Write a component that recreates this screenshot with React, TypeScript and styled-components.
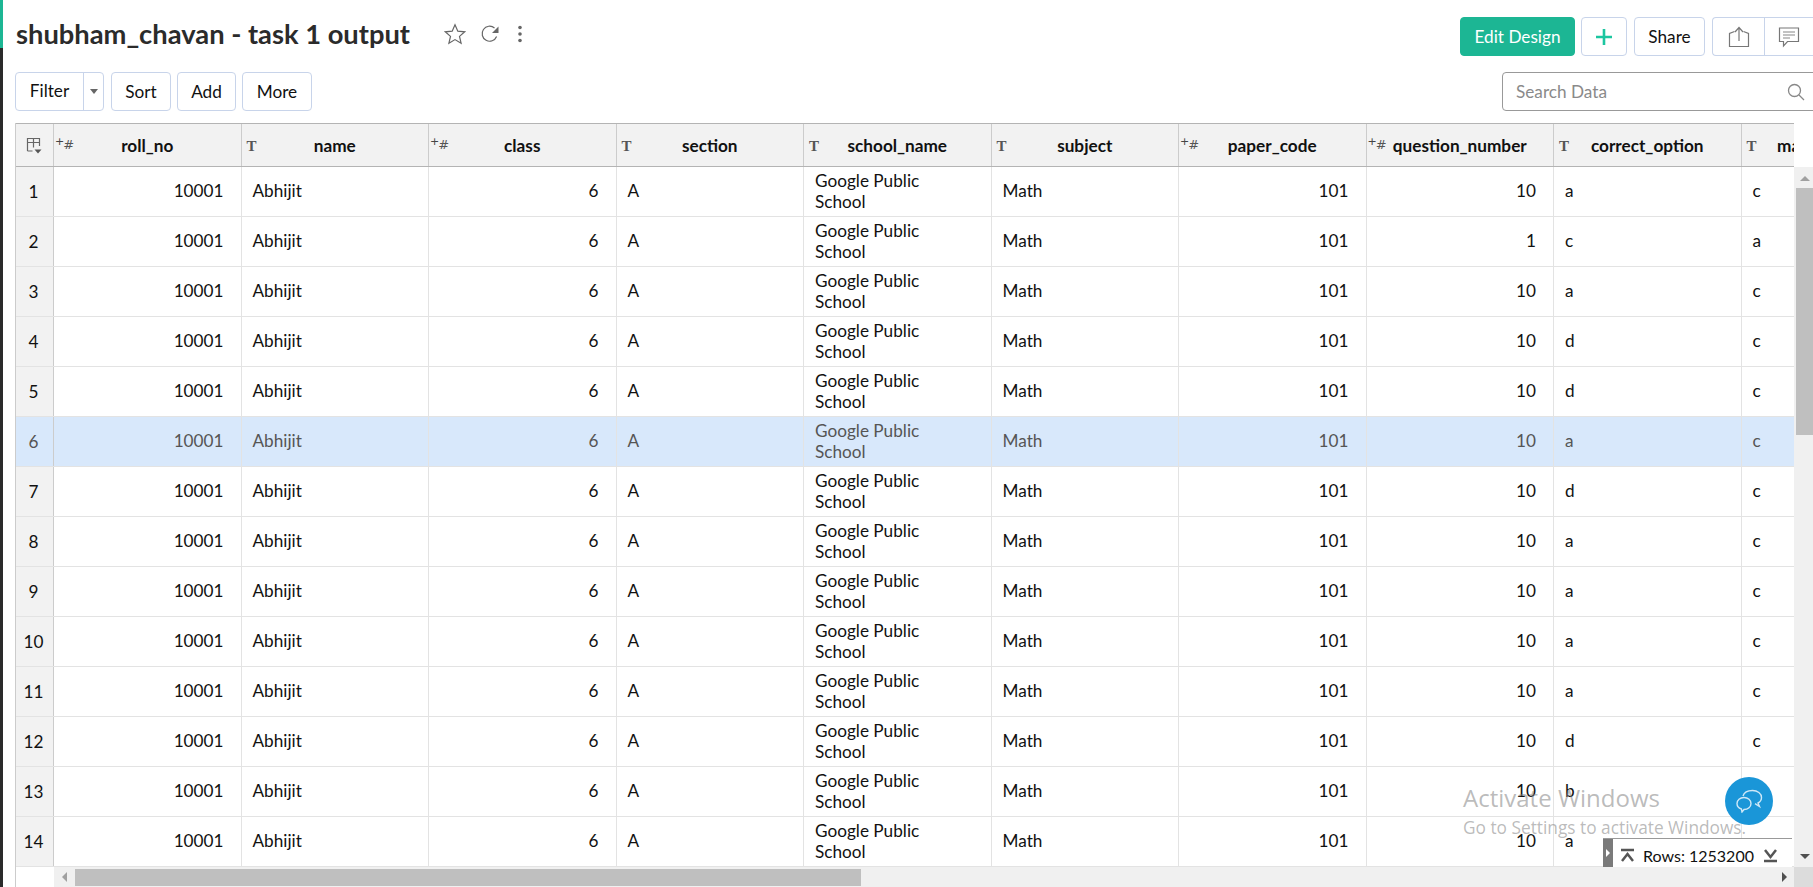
import React from "react";
import styled, { createGlobalStyle } from "styled-components";

const Global = createGlobalStyle`
  html, body { margin: 0; padding: 0; height: 100%; background: #fff; overflow: hidden; }
  #root { height: 100%; }
  * { box-sizing: border-box; }
  body { font-family: Lato, "Open Sans", sans-serif; color: #111; }
`;

const Page = styled.div`
  position: relative;
  display: flex;
  height: 887px;
  width: 1813px;
  overflow: hidden;
`;
const Strip = styled.div`
  width: 3px;
  flex: none;
  background: linear-gradient(#1cb694 0 48px, #2a2a2a 48px);
`;
const Main = styled.div`
  flex: 1;
  min-width: 0;
  display: flex;
  flex-direction: column;
`;
const TopBar = styled.header`
  height: 72px;
  flex: none;
  display: flex;
  align-items: flex-start;
  padding: 17px 0 0 13px;
`;
const Title = styled.h1`
  margin: 0;
  font-size: 27.3px;
  line-height: 34px;
  font-weight: 700;
  color: #2b2b2b;
  white-space: nowrap;
`;
const TitleIcons = styled.div`
  display: flex;
  align-items: center;
  gap: 13px;
  margin: 6px 0 0 34px;
  color: #666;
`;
const DotsWrap = styled.span`
  display: flex;
  margin-left: 3px;
`;
const Spacer = styled.div`
  flex: 1;
`;
const BaseBtn = styled.button`
  height: 39px;
  border: 1px solid #c8d4ea;
  border-radius: 4px;
  background: #fff;
  font-family: Lato, sans-serif;
  font-size: 17.2px;
  color: #111;
  padding: 0;
  display: inline-flex;
  align-items: center;
  justify-content: center;
  flex: none;
`;
const EditBtn = styled(BaseBtn)`
  width: 115px;
  background: #1cb694;
  border-color: #1cb694;
  color: #fff;
  margin-right: 6px;
`;
const WBtn = styled(BaseBtn)<{ $w: number; $mr?: number }>`
  width: ${(p) => p.$w}px;
  margin-right: ${(p) => p.$mr ?? 0}px;
`;
const IconGroup = styled.div`
  width: 101px;
  height: 39px;
  flex: none;
  display: flex;
  border: 1px solid #c8d4ea;
  border-right: none;
  border-radius: 4px 0 0 4px;
`;
const IconCell = styled.div<{ $w: number; $line?: boolean }>`
  width: ${(p) => p.$w}px;
  flex: none;
  display: flex;
  align-items: center;
  justify-content: center;
  color: #777;
  border-right: ${(p) => (p.$line ? "1px solid #c8d4ea" : "none")};
`;
const Toolbar = styled.div`
  height: 51px;
  flex: none;
  display: flex;
  align-items: flex-start;
  padding-left: 12px;
  gap: 6px;
`;
const SplitBtn = styled.div`
  width: 89px;
  height: 39px;
  display: flex;
  border: 1px solid #c8d4ea;
  border-radius: 4px;
  font-size: 17.2px;
  flex: none;
  margin-right: 1px;
`;
const SplitLabel = styled.div`
  width: 68px;
  border-right: 1px solid #c8d4ea;
  display: flex;
  align-items: center;
  justify-content: center;
  padding-bottom: 2px;
`;
const SplitCaret = styled.div`
  flex: 1;
  display: flex;
  align-items: center;
  justify-content: center;
  &::after {
    content: "";
    border: 4.5px solid transparent;
    border-top: 5px solid #666;
    border-bottom: none;
  }
`;
const SearchBox = styled.div`
  width: 328px;
  height: 39px;
  flex: none;
  border: 1px solid #999;
  border-radius: 4px 0 0 4px;
  display: flex;
  align-items: center;
  justify-content: space-between;
  padding: 0 3px 0 13px;
  font-size: 17.2px;
  color: #8a8a8a;
  margin-left: auto;
  margin-right: -17px;
  position: relative;
`;
const SearchIconWrap = styled.div`
  color: #888;
  margin-right: 21px;
  display: flex;
`;
const GridArea = styled.div`
  flex: 1;
  min-height: 0;
  margin-left: 12px;
  border-left: 1px solid #ccc;
  display: grid;
  grid-template-columns: 1fr 19px;
  grid-template-rows: 44px 700px 20px;
`;
const HeaderRow = styled.div`
  grid-column: 1 / 2;
  grid-row: 1;
  display: grid;
  grid-template-columns: 38px repeat(10, 187.5px);
  background: #f2f2f2;
  border-top: 1px solid #b4b4b4;
  border-bottom: 1px solid #b4b4b4;
  overflow: hidden;
`;
const HeadCell = styled.div`
  position: relative;
  display: flex;
  align-items: center;
  justify-content: center;
  border-right: 1px solid #ccc;
  font-size: 17.2px;
  font-weight: 700;
  color: #111;
  white-space: nowrap;
`;
const IndexHead = styled(HeadCell)`
  color: #666;
`;
const TypeT = styled.span`
  position: absolute;
  left: 5px;
  top: 14px;
  font: 700 15px "Liberation Serif", serif;
  color: #555;
`;
const TypeNum = styled.span`
  position: absolute;
  left: 1px;
  top: 12px;
  font: 400 13px/18px "DejaVu Sans", sans-serif;
  color: #555;
  letter-spacing: -1px;
  & > sup {
    font-size: 11px;
    line-height: 0;
    vertical-align: 4px;
    color: #444;
  }
`;
const BodyClip = styled.div`
  grid-column: 1;
  grid-row: 2;
  overflow: hidden;
`;
const Row = styled.div<{ $active?: boolean }>`
  display: grid;
  grid-template-columns: 38px repeat(10, 187.5px);
  height: 50px;
  border-bottom: 1px solid #e3e3e3;
  background: ${(p) => (p.$active ? "#d8e8fb" : "#fff")};
  color: ${(p) => (p.$active ? "#555" : "#111")};
  font-size: 17.2px;
`;
const Cell = styled.div<{ $num?: boolean }>`
  display: flex;
  align-items: center;
  justify-content: ${(p) => (p.$num ? "flex-end" : "flex-start")};
  padding: ${(p) => (p.$num ? "0 17px 0 0" : "0 0 0 11px")};
  border-right: 1px solid #e3e3e3;
  line-height: 20.5px;
`;
const IndexCell = styled.div<{ $active?: boolean }>`
  display: flex;
  align-items: center;
  justify-content: center;
  background: ${(p) => (p.$active ? "#d8e8fb" : "#f2f2f2")};
  border-right: 1px solid #ccc;
  padding-right: 2px;
`;
const WrapText = styled.span`
  width: 130px;
`;
const VScroll = styled.div`
  grid-column: 2;
  grid-row: 1 / 3;
  margin-top: 44px;
  background: #f0f0f0;
  display: flex;
  flex-direction: column;
  align-items: stretch;
  justify-content: space-between;
  padding: 2px 0 0 2px;
  position: relative;
`;
const UpArrow = styled.div`
  height: 19px;
  display: flex;
  justify-content: center;
  align-items: center;
  &::after {
    content: "";
    border: 5px solid transparent;
    border-bottom: 5px solid #a0a0a0;
    border-top: none;
  }
`;
const VThumb = styled.div`
  height: 247px;
  background: #bfbfbf;
  flex: none;
`;
const DownArrow = styled.div`
  margin-top: auto;
  height: 22px;
  display: flex;
  justify-content: center;
  align-items: center;
  &::after {
    content: "";
    border: 5px solid transparent;
    border-top: 5px solid #505050;
    border-bottom: none;
  }
`;
const HScroll = styled.div`
  grid-column: 1;
  grid-row: 3;
  margin-left: 38px;
  background: #f0f0f0;
  display: flex;
  align-items: center;
  padding: 1px 0 1px 0;
`;
const LeftArrow = styled.div`
  width: 21px;
  display: flex;
  justify-content: center;
  &::after {
    content: "";
    border: 5px solid transparent;
    border-right: 5px solid #a0a0a0;
    border-left: none;
  }
`;
const HThumb = styled.div`
  width: 786px;
  height: 17px;
  background: #bfbfbf;
`;
const RightArrow = styled.div`
  margin-left: auto;
  width: 19px;
  display: flex;
  justify-content: center;
  &::after {
    content: "";
    border: 5px solid transparent;
    border-left: 5px solid #505050;
    border-right: none;
  }
`;
const Corner = styled.div`
  grid-column: 2;
  grid-row: 3;
  background: #dcdcdc;
`;
const Watermark = styled.div`
  position: absolute;
  left: 1463px;
  top: 781px;
  font-family: "Open Sans", sans-serif;
  color: rgba(130, 130, 130, 0.55);
  pointer-events: none;
  white-space: nowrap;
`;
const WmTop = styled.div`
  font-size: 24px;
  line-height: 34px;
`;
const WmSub = styled.div`
  font-size: 17.3px;
  line-height: 24px;
  margin-top: 1px;
`;
const Bubble = styled.div`
  position: absolute;
  left: 1725px;
  top: 777px;
  width: 48px;
  height: 48px;
  border-radius: 50%;
  background: #1a96d8;
  display: flex;
  align-items: center;
  justify-content: center;
`;
const RowsBox = styled.div`
  position: absolute;
  left: 1603px;
  top: 838px;
  width: 189px;
  height: 29px;
  background: #fff;
  border-top: 1px solid #999;
  display: flex;
  align-items: center;
  padding-top: 5px;
  font-size: 16px;
  color: #111;
`;
const Handle = styled.div`
  width: 10px;
  align-self: stretch;
  margin-top: -5px;
  background: #7a7a7a;
  display: flex;
  align-items: center;
  justify-content: center;
  flex: none;
  &::after {
    content: "";
    border: 4px solid transparent;
    border-left: 4px solid #fff;
    border-right: none;
  }
`;
const RowsLabel = styled.span`
  margin: 0 9px 0 8px;
  white-space: nowrap;
`;
const IconMargin = styled.span`
  display: flex;
  margin-left: 7px;
`;

const columns = [
  ["roll_no", "n"],
  ["name", "t"],
  ["class", "n"],
  ["section", "t"],
  ["school_name", "t"],
  ["subject", "t"],
  ["paper_code", "n"],
  ["question_number", "n"],
  ["correct_option", "t"],
  ["marked_option", "t"],
];

const rowsData: [number, string, string][] = [
  [10, "a", "c"],
  [1, "c", "a"],
  [10, "a", "c"],
  [10, "d", "c"],
  [10, "d", "c"],
  [10, "a", "c"],
  [10, "d", "c"],
  [10, "a", "c"],
  [10, "a", "c"],
  [10, "a", "c"],
  [10, "a", "c"],
  [10, "d", "c"],
  [10, "b", ""],
  [10, "a", ""],
];

const GridIcon = () => (
  <svg width="17" height="17" viewBox="0 0 17 17" fill="none" stroke="#666" strokeWidth="1.2">
    <path d="M1.5 14V1.5h12V9M1.5 5.5h12M7.5 1.5v9M1.5 14h5" />
    <path d="M8.5 12.5h7l-3.5 4z" fill="#555" stroke="none" />
  </svg>
);
const StarIcon = () => (
  <svg width="22" height="22" viewBox="0 0 22 22" fill="none" stroke="#666" strokeWidth="1.2">
    <path d="M11 1.8l2.8 6.4 6.9.6-5.2 4.6 1.6 6.8-6.1-3.6-6.1 3.600 1.600-6.800L1.300 8.800l6.900-.6z" />
  </svg>
);
const RefreshIcon = () => (
  <svg width="22" height="22" viewBox="0 0 22 22" fill="none" stroke="#666" strokeWidth="1.2">
    <path d="M17.6 13.5A7.5 7.5 0 1 1 15.5 5" />
    <path d="M19.5 3.5v6.5h-6.5z" fill="#666" stroke="none" />
  </svg>
);
const DotsIcon = () => (
  <svg width="6" height="22" viewBox="0 0 6 22" fill="#666">
    <circle cx="3" cy="4.500" r="1.800" />
    <circle cx="3" cy="11" r="1.800" />
    <circle cx="3" cy="17.500" r="1.800" />
  </svg>
);
const PlusIcon = () => (
  <svg width="18" height="18" viewBox="0 0 18 18" stroke="#1cc6a0" strokeWidth="2.6">
    <path d="M9 1v16M1 9h16" />
  </svg>
);
const ShareIcon = () => (
  <svg width="22" height="22" viewBox="0 0 22 22" fill="none" stroke="#777" strokeWidth="1.2">
    <path d="M6.5 5.5L1.5 7.5v13h19v-13l-5-2" />
    <path d="M11 15V2M7 6l4-4.500L15 6" />
  </svg>
);
const CommentIcon = () => (
  <svg width="22" height="22" viewBox="0 0 22 22" fill="none" stroke="#777" strokeWidth="1.2">
    <path d="M1.5 2h19v13.5H9.500L5.500 20v-4.500h-4z" />
    <path d="M5 6h12M5 9h12M5 12h7" stroke="#888" />
  </svg>
);
const SearchIcon = () => (
  <svg width="18" height="18" viewBox="0 0 18 18" fill="none" stroke="#888" strokeWidth="1.3">
    <circle cx="7.5" cy="7.5" r="6" />
    <path d="M12 12l5 5" />
  </svg>
);
const ChatIcon = () => (
  <svg width="28" height="24" viewBox="0 0 28 24" fill="none" stroke="#cfe8f7" strokeWidth="1.4">
    <path d="M8 7c1-3.500 5-5.500 9.500-5.500C22.500 1.500 26.500 4.500 26.500 8.500c0 2.500-1.500 4.500-3.500 5.500l1.500 3.500-4.500-2.800" />
    <path d="M2 14.500C2 11 5 8.500 9 8.500s7 2.500 7 6-3 6-7 6l-2 2.500-.6-3C3.500 19 2 17 2 14.500z" />
  </svg>
);
const TopArrowIcon = () => (
  <svg width="15" height="15" viewBox="0 0 15 15" fill="none" stroke="#555" strokeWidth="2.5">
    <path d="M1 2h13M2 13l5.500-7L13 13" />
  </svg>
);
const BottomArrowIcon = () => (
  <svg width="15" height="15" viewBox="0 0 15 15" fill="none" stroke="#555" strokeWidth="2.5">
    <path d="M1 13h13M2 2l5.500 7L13 2" />
  </svg>
);

export default function App() {
  return (
    <Page>
      <Global />
      <Strip />
      <Main>
        <TopBar>
          <Title>shubham_chavan - task 1 output</Title>
          <TitleIcons>
            <StarIcon />
            <RefreshIcon />
            <DotsWrap>
              <DotsIcon />
            </DotsWrap>
          </TitleIcons>
          <Spacer />
          <EditBtn>Edit Design</EditBtn>
          <WBtn $w={46} $mr={7}>
            <PlusIcon />
          </WBtn>
          <WBtn $w={71} $mr={7}>
            Share
          </WBtn>
          <IconGroup>
            <IconCell $w={52} $line>
              <ShareIcon />
            </IconCell>
            <IconCell $w={48}>
              <CommentIcon />
            </IconCell>
          </IconGroup>
        </TopBar>
        <Toolbar>
          <SplitBtn>
            <SplitLabel>Filter</SplitLabel>
            <SplitCaret />
          </SplitBtn>
          <WBtn $w={60}>Sort</WBtn>
          <WBtn $w={59}>Add</WBtn>
          <WBtn $w={70}>More</WBtn>
          <SearchBox>
            Search Data
            <SearchIconWrap>
              <SearchIcon />
            </SearchIconWrap>
          </SearchBox>
        </Toolbar>
        <GridArea>
          <HeaderRow>
            <IndexHead>
              <GridIcon />
            </IndexHead>
            {columns.map(([name, kind]) => (
              <HeadCell key={name}>
                {kind === "t" ? (
                  <TypeT>T</TypeT>
                ) : (
                  <TypeNum>
                    <sup>+</sup>#
                  </TypeNum>
                )}
                {name}
              </HeadCell>
            ))}
          </HeaderRow>
          <BodyClip>
            {rowsData.map(([q, correct, marked], i) => {
              const active = i === 5;
              return (
                <Row key={i} $active={active}>
                  <IndexCell $active={active}>{i + 1}</IndexCell>
                  <Cell $num>10001</Cell>
                  <Cell>Abhijit</Cell>
                  <Cell $num>6</Cell>
                  <Cell>A</Cell>
                  <Cell>
                    <WrapText>Google Public School</WrapText>
                  </Cell>
                  <Cell>Math</Cell>
                  <Cell $num>101</Cell>
                  <Cell $num>{q}</Cell>
                  <Cell>{correct}</Cell>
                  <Cell>{marked}</Cell>
                </Row>
              );
            })}
          </BodyClip>
          <VScroll>
            <UpArrow />
            <VThumb />
            <DownArrow />
          </VScroll>
          <HScroll>
            <LeftArrow />
            <HThumb />
            <RightArrow />
          </HScroll>
          <Corner />
        </GridArea>
      </Main>
      <Watermark>
        <WmTop>Activate Windows</WmTop>
        <WmSub>Go to Settings to activate Windows.</WmSub>
      </Watermark>
      <Bubble>
        <ChatIcon />
      </Bubble>
      <RowsBox>
        <Handle />
        <IconMargin>
          <TopArrowIcon />
        </IconMargin>
        <RowsLabel>Rows: 1253200</RowsLabel>
        <BottomArrowIcon />
      </RowsBox>
    </Page>
  );
}
